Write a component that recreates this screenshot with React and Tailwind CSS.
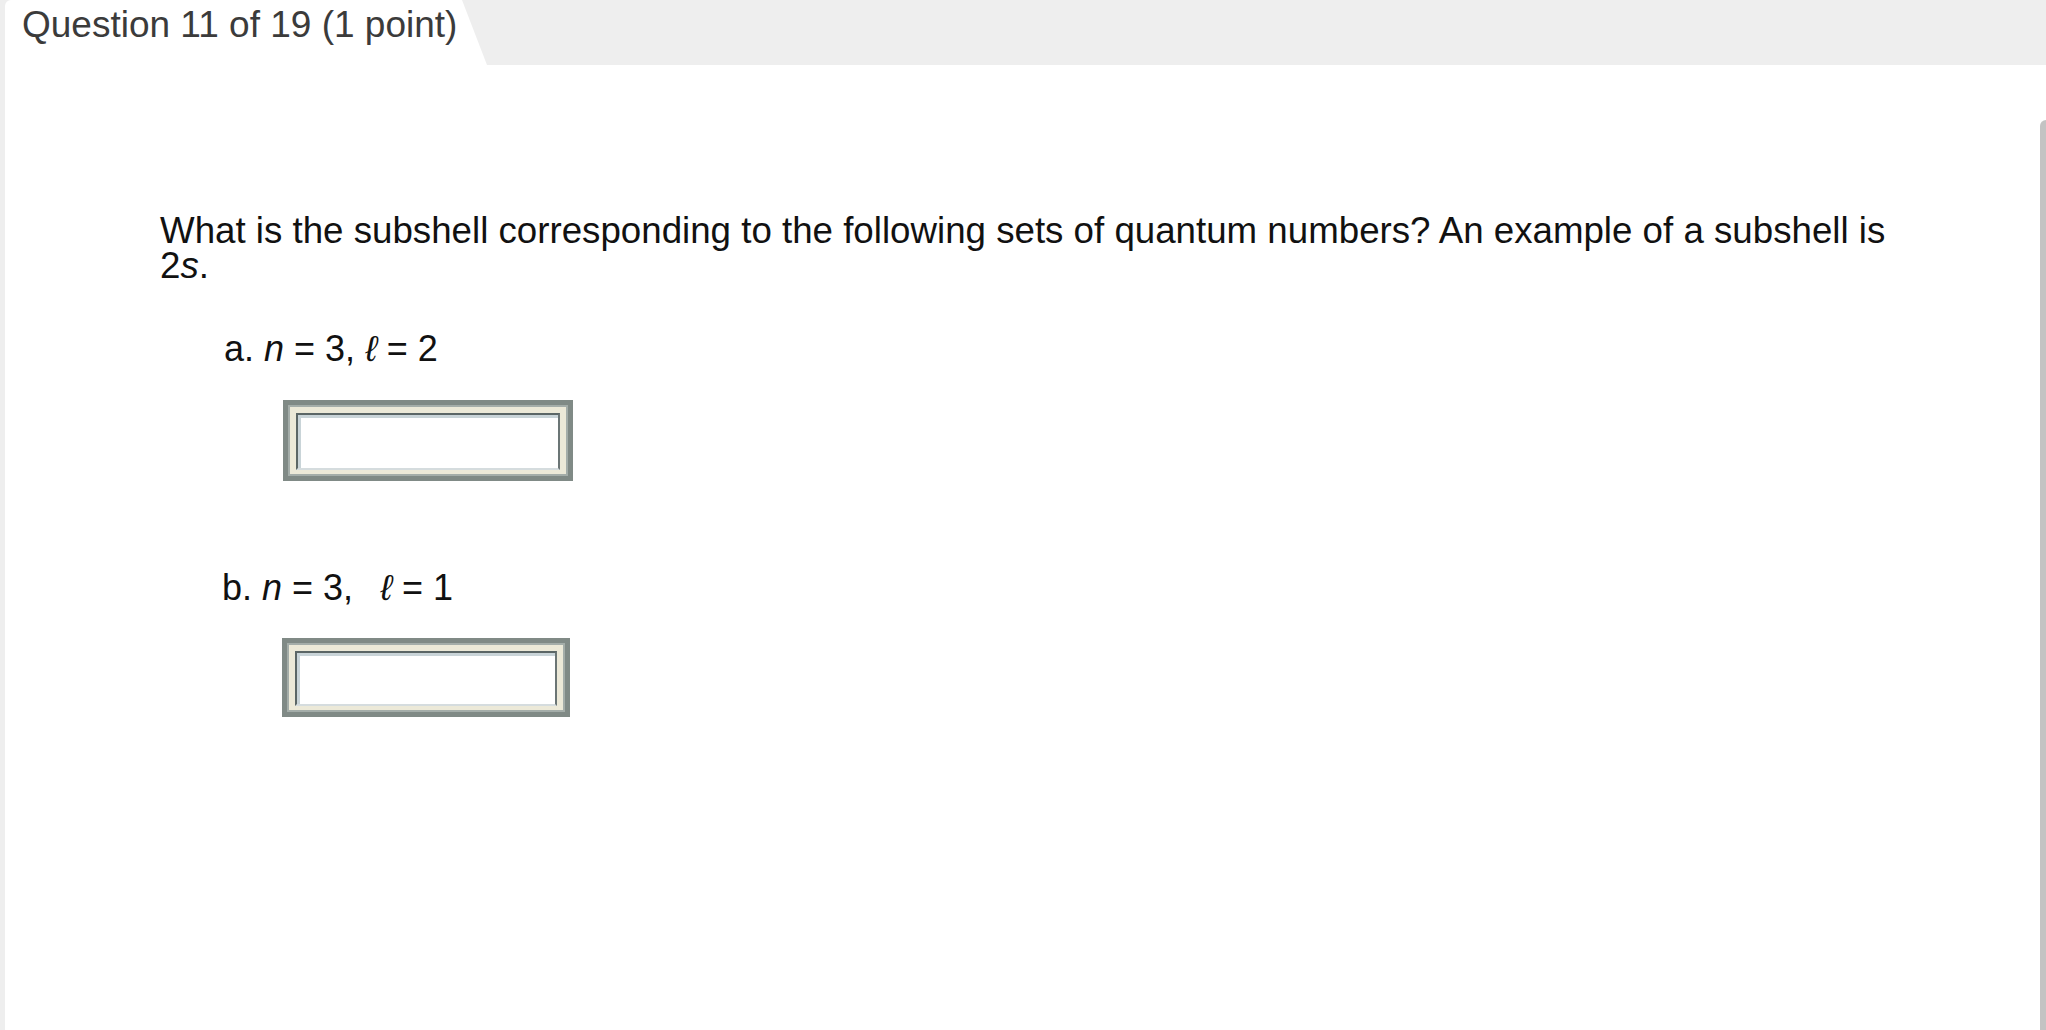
import React from "react";

function AnswerBox({ className = "" }) {
  return (
    <div
      className={`w-[290px] h-[81px] border-[5px] border-[#808a86] bg-[#ece9d8] pt-[8px] px-[8px] pb-[6px] shadow-[inset_0_0_0_2px_#a4ada9] ${className}`}
    >
      <input
        type="text"
        className="block w-full h-full bg-white border-2 border-t-[#5b6666] border-l-[#5b6666] border-r-[#6b7575] border-b-[#d5dcde] shadow-[inset_3px_3px_0_#c9d4d8] outline-none"
      />
    </div>
  );
}

export default function App() {
  return (
    <div
      className="min-h-screen bg-[#eeeeee] pl-[5px]"
      style={{ fontFamily: '"Liberation Sans", Arial, Helvetica, sans-serif' }}
    >
      <div className="relative h-[1030px] bg-white rounded-tl-[6px] overflow-hidden">
        <div className="flex h-[65px]">
          <div className="w-[457px] pl-[17px] pt-[5px] text-[37px] leading-[40px] text-[#3b3b3b] whitespace-nowrap">
            Question 11 of 19 (1 point)
          </div>
          <div className="w-[25px] bg-[#eeeeee] [clip-path:polygon(0_0,100%_0,100%_100%)]" />
          <div className="flex-1 bg-[#eeeeee]" />
        </div>

        <div className="pl-[155px] flex flex-col">
          <p className="mt-[148px] w-[1765px] text-[36.7px] leading-[35px] text-[#111]">
            What is the subshell corresponding to the following sets of quantum numbers? An example of a subshell is 2<i>s</i>.
          </p>

          <div className="ml-[64px] mt-[46px] text-[36px] leading-[40px] text-[#111] whitespace-nowrap">
            a. <i>n</i> = 3, <i>ℓ</i> = 2
          </div>
          <AnswerBox className="ml-[123px] mt-[31px]" />

          <div className="ml-[62px] mt-[87px] text-[36px] leading-[40px] text-[#111] whitespace-nowrap">
            b. <i>n</i> = 3,{"\u00a0\u00a0\u2009"}<i>ℓ</i> = 1
          </div>
          <AnswerBox className="ml-[122px] mt-[30px] !w-[288px] !h-[79px]" />
        </div>

        <div className="absolute right-0 top-[120px] bottom-0 w-[6px] bg-[#c3c3c3] rounded-tl-[6px]" />
      </div>
    </div>
  );
}
